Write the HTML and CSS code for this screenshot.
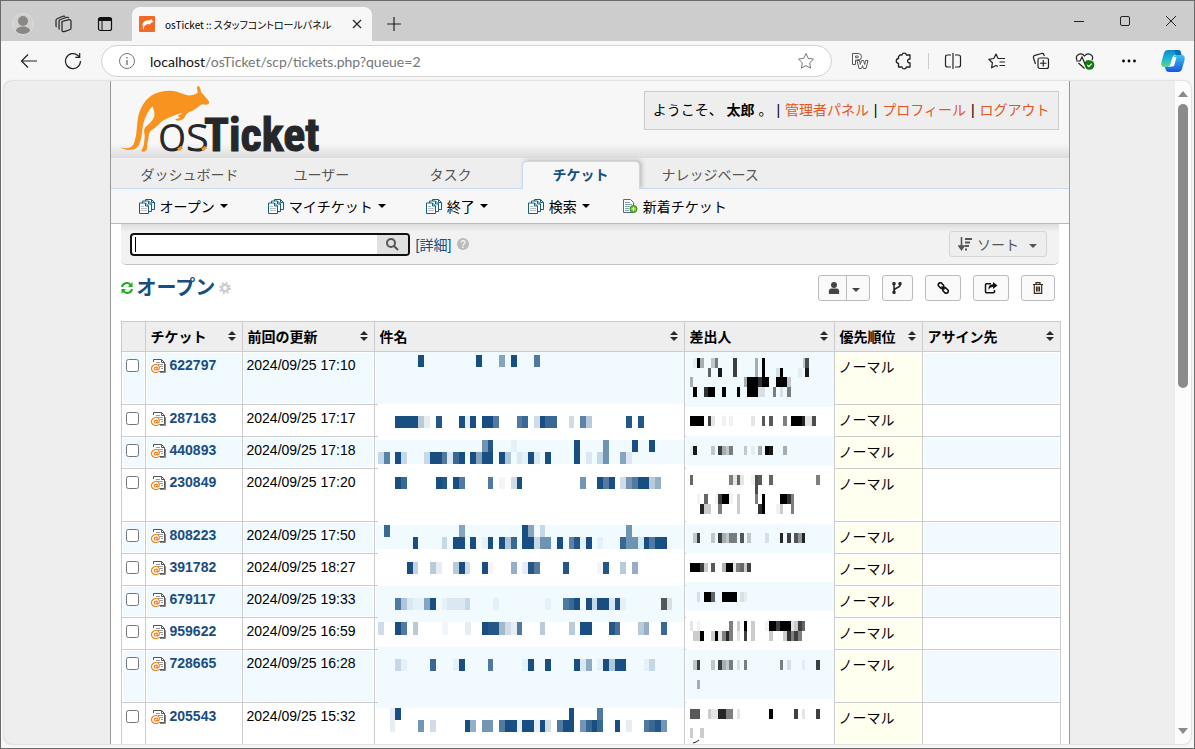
FILE: index.html
```html
<!DOCTYPE html>
<html lang="ja">

<head>
  <meta charset="utf-8">
  <title>osTicket :: スタッフコントロールパネル</title>
  <meta name="viewport" content="width=device-width, initial-scale=1">
  <link rel="stylesheet" href="styles.css">
</head>

<body>

  <!-- shared icons -->
  <svg class="defs" aria-hidden="true">
    <symbol id="i-pages" viewBox="0 0 16 16">
      <path d="M6.500 1.500h6l3 3v7h-9z M12.500 1.500v3h3" fill="#fff" stroke="#11607f"/>
      <path d="M3.500 3h6l3 3v7.500h-9z M9.500 3v3h3" fill="#fff" stroke="#11607f"/>
      <path d="M.5 5h6l3 3v7.500h-9z M6.500 5v3h3" fill="#fff" stroke="#11607f"/>
      <path d="M2 8.500h3M2 10.500h6M2 12.500h6" stroke="#bbb"/>
    </symbol>
    <symbol id="i-mail" viewBox="0 0 16 16">
      <path d="M2.500 4V1.500h8l3 3v9H8" fill="#fff" stroke="#555"/>
      <path d="M10.500 1.500v3h3" fill="none" stroke="#555"/>
      <path d="M5 4.500h4M7 6.500h5M9 8.500h3M10 10.500h2" fill="none" stroke="#999"/>
      <path d="M9 14.500h5.500V6" fill="none" stroke="#888"/>
      <circle cx="4.700" cy="10.700" r="4.700" fill="#fff"/>
      <path d="M8 13.600c-3 1.800-7.500.6-7.500-2.800 0-3 2.500-4.500 5-4.300 3 .2 3.800 4.500 1.500 5.300-1.300.3-1-1-.5-3M6.300 9.700c-1.500-1.500-3.500.3-3 1.700.5 1.200 2.300.5 2.800-.7" fill="none" stroke="#f47b0c" stroke-width="1.100"/>
    </symbol>
    <symbol id="i-sort" viewBox="0 0 8 10"><path d="M4 0l4 4H0zM4 10L0 6h8z" fill="#222b30"/></symbol>
    <symbol id="i-caret" viewBox="0 0 8 4"><path d="M0 0h8L4 4z" fill="currentColor"/></symbol>
  </svg>

  <div class="titlebar">
    <button class="tb-icon" aria-label="プロファイル">
      <svg width="22" height="22" viewBox="0 0 22 22"><circle cx="11" cy="11" r="10.500" fill="#d2d0ce" stroke="#dedcda"/><circle cx="11" cy="8" r="5" fill="#8a8785"/><path d="M4 18c0-6 14-6 14 0-3 4-11 4-14 0z" fill="#8a8785"/></svg>
    </button>
    <button class="tb-icon" aria-label="ワークスペース">
      <svg width="18" height="18" viewBox="0 0 18 18" fill="none" stroke="#222" stroke-width="1.200"><path d="M7 6.500l7-1.800c1-.2 2 .3 2 1.300v7c0 1-.4 1.500-1.300 1.800l-5.500 1.800c-1.200.3-2.200-.2-2.200-1.400z"/><path d="M4.500 14.500c-.4-.4-.5-.8-.5-1.500V6.500c0-1 .5-1.800 1.500-2L12 2.300c1-.2 1.500 0 2 .7"/><path d="M1.500 12C1 11.500 1 11 1 10.500v-5c0-1 .5-1.700 1.500-2L8 1.200c1-.3 1.600-.1 2 .5"/></svg>
    </button>
    <button class="tb-icon" aria-label="タブ操作メニュー">
      <svg width="16" height="16" viewBox="0 0 16 16"><rect x="1.500" y="1.500" width="13" height="13" rx="2" fill="none" stroke="#111" stroke-width="1.200"/><path d="M1.500 2h13v3h-13z" fill="#111"/><path d="M5 5v9.500" stroke="#111"/></svg>
    </button>
    <div class="tab">
      <svg width="16" height="16" viewBox="0 0 16 16"><rect width="16" height="16" rx="1" fill="#f16b26"/><path d="M1.500 13.500c2-.3 2-2 2-4 0-4 3-5.500 7-5l2-1.500.4 1.200 1.600 1.600-2 .7-2 2-2-.4-3 1.700c-.8 1.500 0 3-1.500 4 .5-2-.5-3.500.5-5-1.500 2-1 4.700-3 4.700z" fill="#fff"/></svg>
      <span class="tab-title">osTicket :: スタッフコントロールパネル</span>
      <button aria-label="タブを閉じる"><svg width="10" height="10" viewBox="0 0 10 10"><path d="M1 1l8 8M9 1L1 9" stroke="#222" stroke-width="1.200"/></svg></button>
    </div>
    <button class="new-tab" aria-label="新しいタブ"><svg width="14" height="14" viewBox="0 0 14 14"><path d="M7 0v14M0 7h14" stroke="#222" stroke-width="1.200"/></svg></button>
    <div class="win-controls">
      <button aria-label="最小化"><svg width="12" height="12" viewBox="0 0 12 12"><path d="M1 6.500h10" stroke="#222"/></svg></button>
      <button aria-label="最大化"><svg width="12" height="12" viewBox="0 0 12 12"><rect x="1.500" y="1.500" width="9" height="9" rx="1.500" fill="none" stroke="#222"/></svg></button>
      <button aria-label="閉じる"><svg width="12" height="12" viewBox="0 0 12 12"><path d="M1 1l10 10M11 1L1 11" stroke="#222"/></svg></button>
    </div>
  </div>
  <!-- /.titlebar -->

  <div class="toolbar">
    <button class="nav-btn" aria-label="戻る"><svg width="18" height="16" viewBox="0 0 18 16"><path d="M17 8H1.500M8 1.500L1.500 8 8 14.500" fill="none" stroke="#222" stroke-width="1.200"/></svg></button>
    <button class="nav-btn" aria-label="更新"><svg width="18" height="18" viewBox="0 0 18 18"><path d="M16.500 9A7.500 7.500 0 1 1 14 3.500l1.500 1.500M15.700 1v4.300h-4.400" fill="none" stroke="#222" stroke-width="1.200"/></svg></button>
    <div class="url-bar">
      <svg width="18" height="18" viewBox="0 0 18 18" fill="none" stroke="#777"><circle cx="9" cy="9" r="7.500"/><path d="M9 8v5M9 5v1.500" stroke-width="1.400"/></svg>
      <span class="url"><b>localhost</b>/osTicket/scp/tickets.php?queue=2</span>
      <svg width="18" height="18" viewBox="0 0 18 18"><path d="M9 1.500l2.300 4.900 5.200.7-3.800 3.700.9 5.300L9 13.600l-4.600 2.500.9-5.300L1.500 7.100l5.200-.7z" fill="none" stroke="#777" stroke-linejoin="round"/></svg>
    </div>
    <div class="tools">
      <button aria-label="PW"><svg width="18" height="18" viewBox="0 0 18 18" fill="#fff" stroke="#555" stroke-linejoin="round"><path d="M1.500 1.500h5.500q3.500 0 3.500 3.300T7 8H4.500v4.500h-3zM4.500 4v1.700H6.500q1 0 1-.9T6.500 4z"/><path d="M6 8.500h2.500l.8 4 1.200-4h2l1.200 4 .8-4H17l-2 8h-2.500l-1-3-1 3H8z"/></svg></button>
      <button aria-label="拡張機能"><svg width="18" height="18" viewBox="0 0 18 18"><path d="M5 3h2c.3-2.500 4-2.500 4.500 0H15v4c-3-.3-3.500 4 0 4v4h-3.500c-.5 2.500-4.200 2.500-4.500 0H3.500v-3.500C.5 11 .5 7 3.500 6.500V4.500z" fill="none" stroke="#222" stroke-width="1.300" stroke-linejoin="round"/></svg></button>
    </div>
    <span class="sep"></span>
    <div class="tools">
      <button aria-label="画面を分割"><svg width="18" height="18" viewBox="0 0 18 18" fill="none" stroke="#222" stroke-width="1.200"><path d="M7 3H3.500Q1.500 3 1.500 5v8q0 2 2 2H7M11 3h3.500q2 0 2 2v8q0 2-2 2H11M9 1v16"/></svg></button>
      <button aria-label="お気に入り"><svg width="18" height="18" viewBox="0 0 18 18" fill="none" stroke="#222" stroke-width="1.200"><path d="M10 6.500L8 2 5.800 6.500l-5 .8 3.600 3.500-.8 5 4.400-2.300 2 1M10 6.500h7M11.500 10h5.500M11.500 13.500h5.500" stroke-linejoin="round"/></svg></button>
      <button aria-label="コレクション"><svg width="18" height="18" viewBox="0 0 18 18" fill="none" stroke="#222" stroke-width="1.200"><rect x="6" y="6" width="10.500" height="10.500" rx="2"/><path d="M11.250 8v6.500M8 11.250h6.500M3.500 12L1.500 6q-.5-2 1.500-2.700L9.500 1.500q2-.5 2.500 1.500l.3 1"/></svg></button>
      <button aria-label="ブラウザーのエッセンシャル"><svg width="20" height="18" viewBox="0 0 20 18"><path d="M2 8C-.5 3 6-.5 9.500 4 13-.5 19.500 3 17 8M3.500 11l6 5.500M1 9h4l2-4 3 7 1.500-3H14" fill="none" stroke="#222" stroke-width="1.200"/><circle cx="14.500" cy="13" r="4.800" fill="#107c10"/><path d="M12.300 13l1.600 1.600 2.800-3" fill="none" stroke="#fff" stroke-width="1.200"/></svg></button>
      <button aria-label="設定など"><svg width="16" height="4" viewBox="0 0 16 4"><circle cx="2.500" cy="2" r="1.400"/><circle cx="8" cy="2" r="1.400"/><circle cx="13.500" cy="2" r="1.400"/></svg></button>
      <button aria-label="Copilot">
        <svg width="24" height="24" viewBox="0 0 24 24">
          <linearGradient id="cp1" x2="0" y2="1"><stop offset="0" stop-color="#1187c9"/><stop offset=".5" stop-color="#19b5d5"/><stop offset="1" stop-color="#5fd48a"/></linearGradient>
          <linearGradient id="cp2" x2="0" y2="1"><stop offset="0" stop-color="#38c4ef"/><stop offset="1" stop-color="#1a55e0"/></linearGradient>
          <path d="M7 1h10c2 0 2.500 1 3 3l.5 2H15c-3 0-3.500 2-4.200 5L9.500 15c-.8 2.500-2 3-4 3H3c-3 0-3-3-2.300-6L3 4c.7-2 2-3 4-3z" fill="url(#cp1)"/>
          <path d="M17 23H8c-2 0-3-1-3.500-3L4 18h3c3 0 3.500-2 4.200-5l1.300-4c.8-2.500 2-3 4-3H21c3 0 3 3 2.300 6L21 20c-.7 2-2 3-4 3z" fill="url(#cp2)"/>
          <path d="M13 8h2.500l-2 7.500c-.4 1.500-1 2-2.500 2H9l2-7.500c.4-1.500 1-2 2-2z" fill="#fff"/>
          <path d="M13 1h4c2 0 2.500 1 3 3l.5 2H15z" fill="#0f6db8"/>
        </svg>
      </button>
    </div>
  </div>
  <!-- /.toolbar -->

  <div class="viewport">
    <div class="page">
      <div class="container">

        <header class="header">
          <a href="#" class="logo" aria-label="osTicket">
            <svg width="204" height="84" viewBox="0 0 204 84">
              <g transform="translate(-7 -3) scale(.3333)">
                <path fill="#f7931e" d="M30 202C48 207 64 206 71 192C80 170 80 145 83 120C90 75 117 31 180 32C210 33 224 48 243 46C254 45 262 40 264 36C259 25 261 17 265 18C271 20 272 29 273 37C282 45 291 57 298 66C298 74 289 75 277 73C268 76 263 84 252 90C240 96 236 94 229 103C224 112 221 120 211 121C203 124 196 121 196 118C200 115 208 117 211 112C207 111 204 110 204 107C209 103 215 104 216 99C195 105 177 112 162 120C148 128 141 142 125 150C114 158 117 174 113 186C111 197 113 210 106 213C100 218 93 215 95 209C101 202 102 192 103 181C107 158 98 153 105 143C116 132 131 120 133 107C135 97 130 88 128 79C114 91 102 117 98 142C95 165 93 195 79 204C66 214 42 210 30 202Z"/>
              </g>
              <text x="41" y="68" class="logo-os">os</text>
              <text x="87" y="68" class="logo-ticket">Ticket</text>
              <path d="M61 67l4-3M85 67l4-3" stroke="#f7931e" stroke-width="3"/>
            </svg>
          </a>
          <p class="welcome">ようこそ、 <strong>太郎</strong> 。 | <a href="#">管理者パネル</a> | <a href="#">プロフィール</a> | <a href="#">ログアウト</a></p>
        </header>

        <nav class="nav">
          <a href="#" class="n1">ダッシュボード</a>
          <a href="#" class="n2">ユーザー</a>
          <a href="#" class="n3">タスク</a>
          <a href="#" class="active">チケット</a>
          <a href="#" class="n5">ナレッジベース</a>
        </nav>

        <nav class="sub-nav">
          <a href="#"><svg class="ico"><use href="#i-pages"/></svg>オープン<svg class="caret"><use href="#i-caret"/></svg></a>
          <a href="#"><svg class="ico"><use href="#i-pages"/></svg>マイチケット<svg class="caret"><use href="#i-caret"/></svg></a>
          <a href="#"><svg class="ico"><use href="#i-pages"/></svg>終了<svg class="caret"><use href="#i-caret"/></svg></a>
          <a href="#"><svg class="ico"><use href="#i-pages"/></svg>検索<svg class="caret"><use href="#i-caret"/></svg></a>
          <a href="#"><svg class="ico" viewBox="0 0 16 16"><path d="M1.500 1.500h7l3 3v10h-10z" fill="#fff" stroke="#4d6c8f"/><path d="M3 4.500h5M3 6.500h7M3 8.500h5M3 10.500h4M3 12.500h4" stroke="#7da3b8"/><circle cx="11.500" cy="11" r="3.500" fill="#6abf1f" stroke="#3f8d0c"/><path d="M11.500 9v4M9.500 11h4" stroke="#fff"/></svg>新着チケット</a>
        </nav>

        <main class="content">
          <form class="search">
            <div class="search-box">
              <input type="text" name="query" aria-label="検索">
              <button type="button" aria-label="検索する"><svg width="14" height="14" viewBox="0 0 14 14"><circle cx="6" cy="6" r="4" fill="none" stroke="#555" stroke-width="2"/><path d="M9 9l4 4" stroke="#555" stroke-width="2"/></svg></button>
            </div>
            <a href="#">[詳細]</a>
            <svg class="help" width="12" height="12" viewBox="0 0 12 12"><circle cx="6" cy="6" r="6" fill="#bbb"/><text x="6" y="10" class="q">?</text></svg>
            <button type="button" class="sort-btn">
              <svg width="14" height="14" viewBox="0 0 14 14"><path d="M3.500 0v10M1 9l2.500 3.500L6 9z" stroke="#555" stroke-width="1.600" fill="#555"/><path d="M7 2h7M7 5.500h5M7 9h4M7 12.500h2" stroke="#555" stroke-width="2"/></svg>
              ソート
              <svg class="caret"><use href="#i-caret"/></svg>
            </button>
          </form>

          <div class="heading">
            <a href="#" aria-label="更新"><svg width="12" height="12" viewBox="0 0 12 12"><path d="M1 5c.7-4.500 6.500-5 8.500-2M11 7c-.7 4.500-6.500 5-8.500 2" fill="none" stroke="#1cab1c" stroke-width="2"/><path d="M11.500 0v5H7zM.5 12V7H5z" fill="#1cab1c"/></svg></a>
            <h2>オープン</h2>
            <svg class="cog" width="12" height="12" viewBox="0 0 12 12"><circle cx="6" cy="6" r="3.200" fill="none" stroke="#ccc" stroke-width="2.400"/><circle cx="6" cy="6" r="5" fill="none" stroke="#ccc" stroke-width="2" stroke-dasharray="2 1.927"/></svg>
            <div class="actions">
              <div class="btn-group">
                <button aria-label="アサイン"><svg width="12" height="12" viewBox="0 0 12 12" fill="#444"><circle cx="6" cy="3" r="3"/><path d="M1 12Q0 6.500 3.500 6.500h5Q12 6.500 11 12z"/></svg></button>
                <button class="drop" aria-label="アサイン先を選択"><svg class="caret"><use href="#i-caret"/></svg></button>
              </div>
              <button class="btn w31" aria-label="転送"><svg width="10" height="12" viewBox="0 0 10 12" fill="none" stroke="#222" stroke-width="1.500"><path d="M2 2v8M8 3c0 3.500-6 2-6 6"/><circle cx="2" cy="1.700" r="1"/><circle cx="8" cy="1.700" r="1"/><circle cx="2" cy="10.300" r="1"/></svg></button>
              <button class="btn" aria-label="リンク"><svg width="12" height="12" viewBox="0 0 12 12" fill="none" stroke="#111" stroke-width="1.600"><rect x="1" y="1.500" width="6" height="4" rx="2" transform="rotate(45 4 3.500)"/><rect x="5.500" y="6.500" width="6" height="4" rx="2" transform="rotate(45 8.500 8.500)"/><path d="M4.500 4.500l3 3"/></svg></button>
              <button class="btn" aria-label="ステータス"><svg width="14" height="12" viewBox="0 0 14 12"><path d="M7 1.700H2.500q-1 0-1 1v7q0 1 1 1h7q1 0 1-1V8" fill="none" stroke="#111" stroke-width="1.500"/><path d="M9 0l4.500 3.500L9 7V5Q6 4.500 4.500 8 3.800 2.500 9 2.200z" fill="#111"/></svg></button>
              <button class="btn w34" aria-label="削除"><svg width="12" height="12" viewBox="0 0 12 12" fill="none" stroke="#3a2a18"><path d="M1 2.500h10M4 2V.7h4V2M2.300 3v8.300h7.400V3M4.500 4.500v5M6 4.500v5M7.500 4.500v5" stroke-width="1.200"/></svg></button>
            </div>
          </div>

          <table class="list">
            <colgroup>
              <col class="c-check"><col class="c-ticket"><col class="c-date"><col><col class="c-from"><col class="c-prio"><col class="c-assign">
            </colgroup>
            <thead>
              <tr>
                <th></th>
                <th><span>チケット<svg><use href="#i-sort"/></svg></span></th>
                <th><span>前回の更新<svg><use href="#i-sort"/></svg></span></th>
                <th><span>件名<svg><use href="#i-sort"/></svg></span></th>
                <th><span>差出人<svg><use href="#i-sort"/></svg></span></th>
                <th><span>優先順位<svg><use href="#i-sort"/></svg></span></th>
                <th><span>アサイン先<svg><use href="#i-sort"/></svg></span></th>
              </tr>
            </thead>
            <tbody id="tickets"></tbody>
          </table>
        </main>

      </div>
    </div>

    <div class="scrollbar">
      <svg width="10" height="6" viewBox="0 0 10 6"><path d="M5 0l5 6H0z" fill="#8b8b8b"/></svg>
      <div class="track"><div class="thumb"></div></div>
      <svg width="10" height="6" viewBox="0 0 10 6"><path d="M0 0h10L5 6z" fill="#8b8b8b"/></svg>
    </div>
  </div>
  <!-- /.viewport -->

  <script src="tickets.js"></script>
</body>

</html>
```

FILE: styles.css
```css
* {
  box-sizing: border-box;
}

body {
  margin: 0;
  height: 100vh;
  display: flex;
  flex-direction: column;
  overflow: hidden;
  border: 1px solid #6b6b6b;
  background: #f7f7f7;
  color: #000;
  font-size: 14px;
  font-family: "Liberation Sans", "Noto Sans CJK JP", sans-serif;
}

a {
  color: #184e81;
  text-decoration: none;
}

button {
  border: 0;
  padding: 0;
  background: none;
  font: inherit;
  display: flex;
  align-items: center;
  justify-content: center;
}

svg {
  display: block;
  flex: none;
}

.defs {
  position: absolute;
  width: 0;
  height: 0;
}

.caret {
  width: 8px;
  height: 4px;
}

/* browser window */

.titlebar {
  display: flex;
  align-items: center;
  height: 40px;
  flex: none;
  padding-left: 1px;
  background: #cdcdcd;
}

.tb-icon {
  width: 41px;
  padding-top: 6px;
}

.tab {
  display: flex;
  align-items: center;
  align-self: flex-end;
  width: 240px;
  height: 34px;
  margin-left: 7px;
  padding: 0 10px 0 7px;
  gap: 10px;
  border-radius: 8px 8px 0 0;
  background: #f7f7f7;
}

.tab-title {
  flex: 1;
  white-space: nowrap;
  font: 10px "Noto Sans CJK JP", sans-serif;
  font-feature-settings: "palt";
}

.new-tab {
  width: 44px;
  padding-top: 6px;
}

.win-controls {
  display: flex;
  margin-left: auto;
}

.win-controls button {
  width: 46px;
  height: 38px;
}

.toolbar {
  display: flex;
  align-items: center;
  flex: none;
  height: 40px;
  padding: 0 9px 0 6px;
  gap: 12px;
}

.nav-btn {
  width: 44px;
  margin-right: -12px;
}

.url-bar {
  flex: 1;
  display: flex;
  align-items: center;
  height: 32px;
  margin: 0 4px 0 6px;
  padding: 0 16px;
  gap: 14px;
  border: 1px solid #d2d2d2;
  border-radius: 16px;
  background: #fff;
}

.url {
  flex: 1;
  color: #767676;
  font: 14px Lato, sans-serif;
}

.url b {
  color: #111;
  font-weight: normal;
}

.tools {
  display: flex;
  gap: 20px;
}

.tools button {
  width: 24px;
  height: 24px;
}

.sep {
  width: 1px;
  height: 16px;
  background: #ccc;
}

.viewport {
  flex: 1;
  min-height: 0;
  display: flex;
  margin: 0 3px 4px;
  border-radius: 8px;
  overflow: hidden;
  background: #eee;
  box-shadow: 0 0 2px #aaa;
}

.page {
  flex: 1;
  overflow: hidden;
}

.scrollbar {
  display: flex;
  flex-direction: column;
  align-items: center;
  width: 16px;
  padding: 10px 0;
  gap: 7px;
  background: #fcfcfc;
}

.track {
  flex: 1;
}

.thumb {
  width: 10px;
  height: 46%;
  border-radius: 5px;
  background: #8b8b8b;
}

/* osTicket page */

.container {
  max-width: 960px;
  margin: 0 auto;
  border: 1px solid #999;
  border-width: 0 1px;
  background: #fff;
}

.header {
  display: flex;
  justify-content: space-between;
  align-items: flex-start;
  height: 77px;
  padding: 2px 10px 0 6px;
  border-bottom: 1px solid #ddd;
  background: linear-gradient(#f7f7f7 82%, #dedede);
}

.logo svg {
  overflow: visible;
}

.logo-os {
  fill: #26272a;
  stroke: #26272a;
  font: 300 48px "Open Sans", sans-serif;
}

.logo-ticket {
  fill: #26272a;
  stroke: #26272a;
  font: bold 46px "Roboto Condensed", Roboto, sans-serif;
}

.welcome {
  margin: 8px 0 0;
  padding: 8px 7px 8px 8px;
  border: 1px solid #ccc;
  background: #eee;
  line-height: 21px;
  white-space: nowrap;
}

.welcome a {
  margin: 0 1px;
  color: #e65524;
}

.nav {
  display: flex;
  height: 31px;
  padding-left: 30px;
  border-bottom: 1px solid #c5d9f1;
  background: #eee;
  line-height: 35px;
}

.nav a {
  color: #555;
}

.n1 {
  width: 153px;
}

.n2 {
  width: 136px;
}

.n3 {
  width: 92px;
}

.nav .active {
  width: 118px;
  height: 28px;
  margin-top: 3px;
  border: 1px solid #c5d9f1;
  border-bottom: 0;
  border-radius: 5px 5px 0 0;
  background: #f7f7f7;
  box-shadow: 2px -1px 4px #bbb;
  clip-path: inset(-5px -6px 0 -5px);
  color: #184e81;
  font-weight: bold;
  text-align: center;
  line-height: 27px;
}

.n5 {
  margin-left: 22px;
}

.sub-nav {
  display: flex;
  height: 35px;
  padding: 0 28px;
  gap: 40px;
  border-bottom: 1px solid #bbb;
  background: #f7f7f7;
}

.sub-nav a {
  display: flex;
  align-items: center;
  gap: 5px;
  color: #000;
}

.sub-nav a:last-child {
  margin-left: -8px;
}

.ico {
  width: 16px;
  height: 16px;
}

.content {
  padding: 0 8px 0 10px;
}

.search {
  display: flex;
  align-items: center;
  height: 41px;
  margin-right: 2px;
  padding: 0 12px 0 9px;
  gap: 6px;
  border-bottom: 1px dotted #aaa;
  border-radius: 0 0 5px 5px;
  background: linear-gradient(#dcdcdc, #f2f2f2 20%);
}

.search-box {
  display: flex;
  width: 280px;
  height: 23px;
  border: 2px solid #101010;
  border-radius: 4px;
  background: #fff;
  overflow: hidden;
}

.search-box input {
  flex: 1;
  min-width: 0;
  padding: 0 3px;
  border: 0;
  outline: 0;
  background: linear-gradient(#000, #000) 3px center / 1px 15px no-repeat;
  font: inherit;
}

.search-box button {
  width: 31px;
  background: #e0e0e0;
}

.q {
  fill: #f2f2f2;
  font: bold 10px "Liberation Sans", sans-serif;
  text-anchor: middle;
}

.sort-btn {
  width: 98px;
  height: 26px;
  margin-left: auto;
  gap: 5px;
  border: 1px solid #d5d5d5;
  border-radius: 3px;
  background: #eee;
  color: #555;
}

.sort-btn .caret {
  margin: 3px 0 0 5px;
}

.heading {
  display: flex;
  align-items: center;
  height: 46px;
  margin-bottom: 10px;
  gap: 4px;
}

h2 {
  margin: 0;
  color: #184e81;
  font-size: 20px;
  line-height: 26px;
}

.actions {
  display: flex;
  gap: 12px;
  margin: 0 6px 0 auto;
}

.btn,
.btn-group {
  width: 36px;
  height: 26px;
  border: 1px solid #bbb;
  border-radius: 3px;
  background: #fafafa;
}

.w31 {
  width: 31px;
}

.w34 {
  width: 34px;
}

.btn-group {
  display: flex;
  width: 52px;
}

.btn-group button {
  flex: 1;
  padding-left: 4px;
}

.btn-group .drop {
  width: 23px;
  flex: none;
  padding: 3px 4px 0 0;
  border-left: 1px solid #bbb;
  color: #444;
}

.list {
  width: 100%;
  table-layout: fixed;
  border-collapse: separate;
  border-spacing: 0;
  border: 1px solid #ccc;
  border-width: 1px 0 0 1px;
}

.c-check {
  width: 24px;
}

.c-ticket {
  width: 97px;
}

.c-date {
  width: 132px;
}

.c-from {
  width: 150px;
}

.c-prio {
  width: 88px;
}

.c-assign {
  width: 138px;
}

.list th {
  height: 30px;
  padding: 0 6px 2px 5px;
  border: 1px solid #ccc;
  border-width: 0 1px 1px 0;
  background: #eee;
  text-align: left;
}

.list th span {
  display: flex;
  align-items: center;
  justify-content: space-between;
}

.list th svg {
  width: 8px;
  height: 10px;
}

.list td {
  height: 32px;
  padding: 3px 4px 0;
  border: 1px solid #ccc;
  border-width: 0 1px 1px 0;
  box-shadow: inset 0 0 0 1px #fff;
  vertical-align: top;
  line-height: 21px;
}

.list .tall td {
  height: 53px;
}

.list tr:nth-child(odd) td {
  background: #f0faff;
}

.list td.prio,
.list tr:nth-child(odd) td.prio {
  padding-top: 5px;
  background: #fffff0;
}

.list td.masked {
  padding: 0;
  border-bottom: 0;
  box-shadow: none;
}

.masked svg {
  width: 100%;
  height: 32px;
}

.tall .masked svg {
  height: 53px;
}

.list input {
  display: block;
  width: 13px;
  height: 13px;
  margin: 4px 0 0;
}

.ticket {
  display: flex;
  align-items: center;
  gap: 3px;
  margin-left: 1px;
  font-weight: bold;
}
```

FILE: tickets.js
```javascript
// ticket number, last update, tall row
var tickets = [
  ["622797", "2024/09/25 17:10", 1],
  ["287163", "2024/09/25 17:17", 0],
  ["440893", "2024/09/25 17:18", 0],
  ["230849", "2024/09/25 17:20", 1],
  ["808223", "2024/09/25 17:50", 0],
  ["391782", "2024/09/25 18:27", 0],
  ["679117", "2024/09/25 19:33", 0],
  ["959622", "2024/09/25 16:59", 0],
  ["728665", "2024/09/25 16:28", 1],
  ["205543", "2024/09/25 15:32", 1]
];

// masked text blocks: [y, height, "x:opacity" or "x+width:opacity", colour]
var subject = [
  [355, 12, "418:100 476:100 499:50 511:100 534:75"],
  [416, 12, "395+23:100 418:30 424:10 436:95 459:100 465+5:10 470:100 482+11:100 493:75 517+5:75 522:85 534:20 540+5:100 545+12:85 569+5:20 580:70 586:30 626:95 638:95"],
  [440, 12, "482:60 488+5:95 511:5 574:100 603:60 632:100 649:100"],
  [452, 12, "378:20 384:70 395:100 401:20 424:20 430+12:100 442+5:75 447:10 453:85 459:100 470:100 476:50 482+11:100 499:100 505:30 517+5:10 522:5 528:100 534:10 545:100 574:100 586:10 597:20 603:60 620:50 626:10"],
  [477, 12, "395:100 401:85 436:100 442+5:95 453:100 459:75 488+5:75 499:5 511:20 517+5:100 580:60 597:100 603:75 609:100 620:20 626:60 632:75 638+11:100 649:30 655:45"],
  [525, 12, "384:85 459:50 522:100 528:50 540+5:20 626:60"],
  [537, 12, "413+5:100 442+5:20 453+12:100 470:100 482:5 488+5:100 499:100 505:30 511:85 522+12:100 534:20 540+11:60 557:100 569+5:70 574:95 580:5 586:100 597:5 620:85 626+12:60 638:10 644+5:100 649:75 655+12:100"],
  [562, 12, "407:100 413+5:25 430:30 436:10 453:30 459:100 465+5:20 482:100 488+5:5 511:45 522:10 528:95 534:75 563:95 597:5 603:95 620:30 632:45"],
  [598, 12, "395:75 401:30 407:10 413+11:5 424:50 430:100 442+5:5 447+18:10 465+5:20 493:5 545:5 563:75 569+5:85 574:100 586:100 592+5:20 597+12:100 609:10 615+5:95 620:5"],
  [598, 12, "661:65 667+5:10", "#000"],
  [622, 13, "378:20 395:100 401:75 413+5:30 442:5 465:10 482:100 488+11:95 499:40 505:20 511:10 517+5:75 540+5:30 569:30 580+12:100 609:95 615+5:80 638:30 644+5:45 661:85"],
  [659, 12, "395:20 401:5 430:85 453:5 459:100 488+5:75 522:5 528:100 545:100 574:100 580:10 586:45 597:5 603:100 609:30 615+11:100 644+5:5 649:20"],
  [708, 12, "390+5:10 395:100 569+5:100 597:75"],
  [720, 12, "390+5:10 418:60 430:20 465+5:100 470:45 482+11:60 499:75 505+12:100 517+5:10 522+12:100 534:10 540+5:100 545:20 557:75 563+11:100 580:60 586:85 592+5:100 597:85 615+5:100 626:10 644+5:75 649:85 655:95 661:60"]
];

var from = [
  [358, 10, "693+4:5 697+3:100 700+4:30 711+4:20 715+3:50 733+4:75 755+3:30 762+3:100 803+2:20 805+4:70"],
  [368, 9, "708+3:60 718+4:90 733+4:75 755+3:30 762+3:100 776+4:10 780+3:100 798+4:5 805+4:90"],
  [377, 10, "690+3:30 744+3:30 747+11:100 758+4:80 762+7:100 776+11:100 787+4:20"],
  [387, 10, "693+4:100 704+4:80 708+7:100 722+4:100 737+3:100 747+11:100 758+7:10 773+3:50 780+3:10 787+4:50"],
  [416, 10, "690+14:100 708+3:75 711+4:10 722+4:5 729+4:5 751+4:10 762+3:65 769+4:65 783+4:50 791+11:100 802+3:85 805+7:10 812+4:70"],
  [446, 9, "690+3:5 693+4:90 711+4:20 718+4:75 722+4:30 726+3:20 729+4:50 744+3:20 751+4:5 758+4:30 765+4:100 769+4:90 783+4:30"],
  [475, 10, "690+3:60 729+4:50 733+4:10 737+3:60 740+4:10 751+4:5 755+3:70 758+4:65 769+4:60 816+4:50"],
  [485, 9, "755+3:70"],
  [494, 10, "697+3:5 704+4:60 715+3:5 718+4:75 722+7:100 729+4:5 737+3:20 755+3:50 762+3:100 780+7:100 787+4:80 791+3:50"],
  [504, 10, "700+4:85 704+7:20 718+4:50 737+3:20 758+4:80 762+3:100 776+4:5 780+3:20 791+3:50"],
  [533, 10, "693+4:20 697+3:75 711+4:20 718+4:75 722+4:30 726+3:20 729+8:50 740+4:65 747+4:20 765+4:10 780+3:85 787+4:75 794+4:65 798+4:40 802+3:85"],
  [563, 9, "690+10:100 700+4:75 704+4:20 711+4:65 722+4:30 726+7:100 733+3:10 736+4:50 740+4:60 744+3:20 747+4:75"],
  [592, 10, "697+3:10 704+7:100 711+4:60 722+15:100 740+4:10 744+3:5"],
  [621, 10, "690+3:10 697+3:5 729+4:50 737+3:20 744+3:100 751+4:20 765+4:5 769+7:100 776+4:75 780+11:100 791+3:10 794+4:20 798+4:75 802+3:60"],
  [631, 10, "693+7:20 700+4:100 711+4:20 715+3:100 718+4:10 722+4:50 726+3:85 729+4:50 737+3:10 744+3:75 751+4:20 769+4:20 783+4:20 787+4:80 791+3:50 794+4:75 798+4:50"],
  [660, 10, "693+4:20 697+3:75 711+4:20 718+4:75 722+4:30 726+3:20 729+4:50 737+3:10 744+3:50 780+3:50 787+4:10 802+3:5 816+4:75"],
  [680, 9, "697+3:30"],
  [709, 10, "690+10:65 708+3:20 711+7:10 718+8:85 726+7:50 737+3:10 769+4:100 794+4:75 802+3:10 816+4:75"],
  [728, 10, "690+3:20 700+4:20"]
];

// [top, bottom] of the tinted bands behind the blocks
var subjectBands = [[352, 404], [440, 464], [525, 549], [586, 622], [647, 708]];
var fromBands = [[352, 407], [436, 465], [524, 553], [582, 611], [650, 699]];
var lines = [404, 436, 468, 521, 553, 585, 617, 649, 702];

function rect(x, y, w, h, fill, opacity) {
  return '<rect x="' + x + '" y="' + y + '" width="' + w + '" height="' + h +
    '" fill="' + fill + '" fill-opacity="' + opacity + '"/>';
}

function buildMask(x, width, bands, rows, color, stub) {
  var out = rect(x, 352, width, 410, "#fff", 1);
  bands.forEach(function (b) {
    out += rect(x + 1, b[0], width - 1, b[1] - b[0], "#f0faff", 1);
  });
  lines.forEach(function (y) {
    out += rect(x, y, stub, 1, "#ccc", 1);
  });
  rows.forEach(function (row) {
    row[2].split(" ").forEach(function (item) {
      var p = item.split(":");
      var pos = p[0].split("+");
      out += rect(pos[0], row[0], pos[1] || 6, row[1], row[3] || color, p[1] / 100);
    });
  });
  return out;
}

var masks = {
  subject: buildMask(375, 309, subjectBands, subject, "#184e81", 3),
  from: buildMask(685, 149, fromBands, from, "#000", 1) +
    '<path d="M693 743l3-1 3-2" fill="none" stroke="#222"/>'
};

var html = "";
var rowTop = 352;
tickets.forEach(function (t) {
  var h = t[2] ? 53 : 32;
  html += '<tr' + (t[2] ? ' class="tall"' : '') + '>' +
    '<td class="check"><input type="checkbox" aria-label="' + t[0] + '"></td>' +
    '<td><a href="#" class="ticket"><svg class="ico"><use href="#i-mail"/></svg>' + t[0] + '</a></td>' +
    '<td>' + t[1] + '</td>' +
    '<td class="masked"><svg viewBox="375 ' + rowTop + ' 309 ' + h + '">' + masks.subject + '</svg></td>' +
    '<td class="masked"><svg viewBox="685 ' + rowTop + ' 149 ' + h + '">' + masks.from + '</svg></td>' +
    '<td class="prio">ノーマル</td>' +
    '<td></td></tr>';
  rowTop += h;
});
document.getElementById("tickets").innerHTML = html;
```
